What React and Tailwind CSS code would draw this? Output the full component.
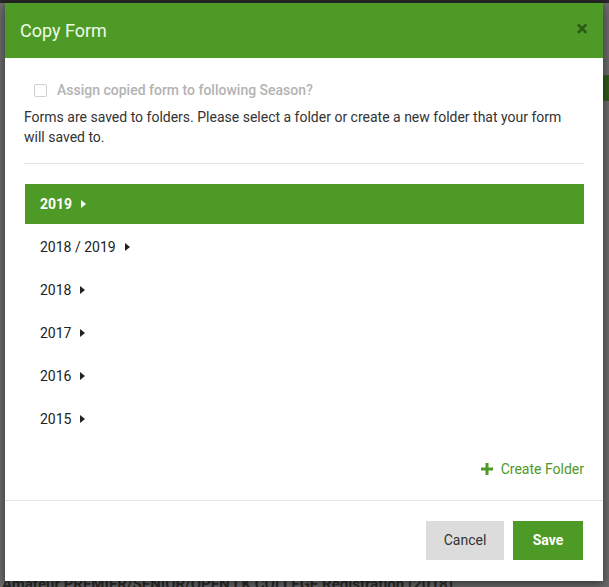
import React, { useState } from "react";

const folders = ["2019", "2018 / 2019", "2018", "2017", "2016", "2015"];

function Caret() {
  return (
    <svg width="5" height="8" viewBox="0 0 5 8" className="shrink-0">
      <path d="M0 0 L5 4 L0 8 Z" fill="currentColor" />
    </svg>
  );
}

export default function App() {
  const [selected, setSelected] = useState("2019");
  const [assign, setAssign] = useState(false);

  return (
    <div
      className="relative w-[609px] h-[587px] overflow-hidden bg-[#6a6a6a]"
      style={{ fontFamily: "Roboto, 'Liberation Sans', sans-serif" }}
    >
      {/* dimmed page behind the dialog */}
      <div className="h-[3px] bg-[#262626]" />
      <div className="flex flex-col">
        <div className="h-[72px] flex justify-end pt-[72px]">
          <div className="w-[10px] h-[26px] bg-[#2f5a1a]" />
        </div>
        <div className="h-[400px]" />
        <div className="pt-[100px] pl-[2px] text-[15px] leading-[18px] font-bold text-[#2b2b2b] whitespace-nowrap">
          Amateur PREMIER/SENIOR/OPEN LK COLLEGE Registration (2018)
        </div>
      </div>

      {/* dialog */}
      <div className="absolute left-[5px] top-[3px] w-[598px] h-[578px] bg-white flex flex-col shadow-[0_3px_9px_rgba(0,0,0,0.5)]">
        <div className="h-[55px] bg-[#4e9a26] flex items-center justify-between pl-[15px] pr-[15px]">
          <h2 className="text-[18px] text-[#eefbe6] leading-none">Copy Form</h2>
          <button className="text-[#2c5a16] text-[22px] font-bold leading-none -mt-[3px]">×</button>
        </div>

        <div className="flex-1 flex flex-col px-[19px] pt-[22px]">
          <label className="flex items-center gap-[10px] pl-[10px] h-[20px] cursor-pointer">
            <input
              type="checkbox"
              checked={assign}
              onChange={(e) => setAssign(e.target.checked)}
              className="appearance-none w-[13px] h-[13px] border border-[#d0d0d0] rounded-[2px] bg-white"
            />
            <span className="text-[14px] font-medium text-[#b3b3b3]">
              Assign copied form to following Season?
            </span>
          </label>

          <p className="mt-[7px] text-[14px] leading-[20px] text-[#333]">
            Forms are saved to folders. Please select a folder or create a new folder that your form
            will saved to.
          </p>

          <div className="mt-[16px] border-t border-[#e3e3e3]" />

          <ul className="mt-[20px] flex flex-col gap-[3px] pl-[1px]">
            {folders.map((f) => (
              <li
                key={f}
                onClick={() => setSelected(f)}
                className={
                  f === selected
                    ? "h-[40px] flex items-center gap-[9px] pl-[15px] bg-[#4e9a26] text-white font-bold text-[14px] cursor-pointer"
                    : "h-[40px] flex items-center gap-[9px] pl-[15px] text-[#222] text-[14px] cursor-pointer"
                }
              >
                <span>{f}</span>
                <Caret />
              </li>
            ))}
          </ul>

          <div className="mt-[20px] flex justify-end">
            <button className="flex items-center gap-[8px] text-[14px] leading-[20px] text-[#4e9a26]">
              <svg width="12" height="12" viewBox="0 0 12 12">
                <path d="M4.5 0 H7.5 V4.5 H12 V7.5 H7.5 V12 H4.5 V7.5 H0 V4.5 H4.5 Z" fill="#4e9a26" />
              </svg>
              Create Folder
            </button>
          </div>
        </div>

        <div className="border-t border-[#e5e5e5] flex justify-end gap-[9px] pt-[20px] pb-[21px] pr-[20px]">
          <button className="w-[78px] h-[39px] bg-[#dcdcdc] text-[14px] text-[#333]">Cancel</button>
          <button className="w-[70px] h-[39px] bg-[#4e9a26] text-[14px] font-bold text-white">Save</button>
        </div>
      </div>
    </div>
  );
}
